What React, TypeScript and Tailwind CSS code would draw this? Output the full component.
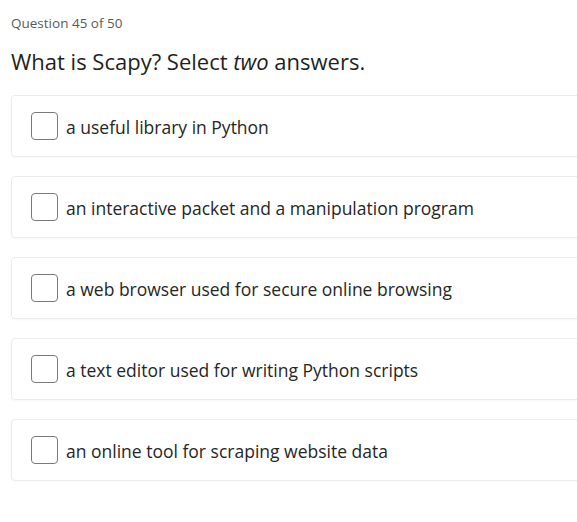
const options = [
  "a useful library in Python",
  "an interactive packet and a manipulation program",
  "a web browser used for secure online browsing",
  "a text editor used for writing Python scripts",
  "an online tool for scraping website data",
];

function Option({ label }: { label: string }) {
  return (
    <label className="flex h-[62px] w-[600px] shrink-0 cursor-pointer items-center rounded-[4px] border border-[#ececec] bg-white pl-[19px] shadow-[0_1px_2px_rgba(0,0,0,0.03)]">
      <span className="h-[28px] w-[27px] shrink-0 rounded-[4px] border-[1.5px] border-[#7a7a7a] bg-white" />
      <span className="ml-[8px] pt-[2px] text-[17.5px] text-[#262626]">{label}</span>
    </label>
  );
}

export default function App() {
  return (
    <div
      className="h-[522px] w-[577px] overflow-hidden bg-white pl-[11px]"
      style={{ fontFamily: '"Open Sans", "Noto Sans", sans-serif' }}
    >
      <div className="pt-[13px] text-[13.5px] text-[#5a5a5a]">Question 45 of 50</div>
      <h1 className="mt-[12px] text-[22px] text-[#1f1f1f]">
        What is Scapy? Select <em>two</em> answers.
      </h1>
      <div className="mt-[17px] flex flex-col gap-[19px]">
        {options.map(o => <Option key={o} label={o} />)}
      </div>
    </div>
  );
}
